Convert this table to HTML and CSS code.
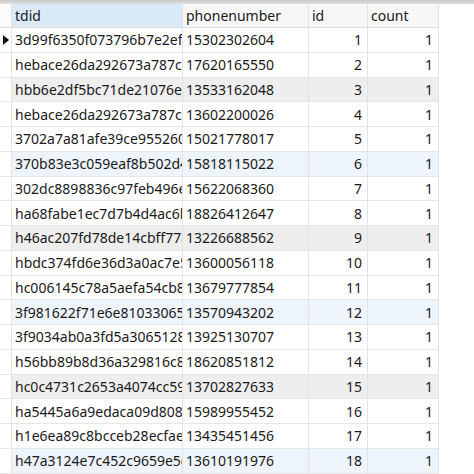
FILE: index.html
```html
<!DOCTYPE html>
<html>
<head>
<meta charset="utf-8">
<link rel="stylesheet" href="styles.css">
</head>
<body>
<div class="topbar"></div>
<div class="grid">
  <div class="c ind hd"></div><div class="c hd sel">tdid</div><div class="c hd">phonenumber</div><div class="c hd">id</div><div class="c hd">count</div>

  <div class="c ind"><span class="arrow"></span></div><div class="c">3d99f6350f073796b7e2ef4a1</div><div class="c">15302302604</div><div class="c num">1</div><div class="c num">1</div>
  <div class="c ind"></div><div class="c">hebace26da292673a787cb5e</div><div class="c">17620165550</div><div class="c num">2</div><div class="c num">1</div>
  <div class="c ind g"></div><div class="c g">hbb6e2df5bc71de21076e4c</div><div class="c g">13533162048</div><div class="c num g">3</div><div class="c num g">1</div>
  <div class="c ind"></div><div class="c">hebace26da292673a787cb5e</div><div class="c">13602200026</div><div class="c num">4</div><div class="c num">1</div>
  <div class="c ind"></div><div class="c">3702a7a81afe39ce955260a</div><div class="c">15021778017</div><div class="c num">5</div><div class="c num">1</div>
  <div class="c ind b"></div><div class="c b">370b83e3c059eaf8b502d4e</div><div class="c b">15818115022</div><div class="c num b">6</div><div class="c num b">1</div>
  <div class="c ind"></div><div class="c">302dc8898836c97feb496e1</div><div class="c">15622068360</div><div class="c num">7</div><div class="c num">1</div>
  <div class="c ind"></div><div class="c">ha68fabe1ec7d7b4d4ac6b2</div><div class="c">18826412647</div><div class="c num">8</div><div class="c num">1</div>
  <div class="c ind g"></div><div class="c g">h46ac207fd78de14cbff77a</div><div class="c g">13226688562</div><div class="c num g">9</div><div class="c num g">1</div>
  <div class="c ind"></div><div class="c">hbdc374fd6e36d3a0ac7e5f</div><div class="c">13600056118</div><div class="c num">10</div><div class="c num">1</div>
  <div class="c ind"></div><div class="c">hc006145c78a5aefa54cb8d</div><div class="c">13679777854</div><div class="c num">11</div><div class="c num">1</div>
  <div class="c ind b"></div><div class="c b">3f981622f71e6e81033065a</div><div class="c b">13570943202</div><div class="c num b">12</div><div class="c num b">1</div>
  <div class="c ind"></div><div class="c">3f9034ab0a3fd5a3065128c</div><div class="c">13925130707</div><div class="c num">13</div><div class="c num">1</div>
  <div class="c ind"></div><div class="c">h56bb89b8d36a329816c8e</div><div class="c">18620851812</div><div class="c num">14</div><div class="c num">1</div>
  <div class="c ind g"></div><div class="c g">hc0c4731c2653a4074cc59a</div><div class="c g">13702827633</div><div class="c num g">15</div><div class="c num g">1</div>
  <div class="c ind"></div><div class="c">ha5445a6a9edaca09d808e</div><div class="c">15989955452</div><div class="c num">16</div><div class="c num">1</div>
  <div class="c ind"></div><div class="c">h1e6ea89c8bcceb28ecfae3</div><div class="c">13435451456</div><div class="c num">17</div><div class="c num">1</div>
  <div class="c ind b"></div><div class="c b">h47a3124e7c452c9659e5d</div><div class="c b">13610191976</div><div class="c num b">18</div><div class="c num b">1</div>
</div>
</body>
</html>
```

FILE: styles.css
```css
html, body {
  margin: 0;
  padding: 0;
  background: #ffffff;
  overflow: hidden;
}
body {
  font-family: "Noto Sans", "Open Sans", sans-serif;
  font-size: 14px;
  color: #1a1a1a;
}
.topbar {
  height: 4px;
  background: linear-gradient(#c9c9c9, #dedede);
}
.grid {
  display: grid;
  grid-template-columns: 12px 171px 126px 59px 71px;
  grid-template-rows: 24px;
  grid-auto-rows: 24.75px;
}
.c {
  box-sizing: border-box;
  border-right: 1px solid #e3e3e3;
  border-bottom: 1px solid #e6e6e6;
  padding: 0 4px 0 3px;
  white-space: nowrap;
  overflow: hidden;
  display: flex;
  align-items: center;
}
.hd {
  background: #f7f7f7;
  border-bottom-color: #dcdcdc;
}
.hd.sel {
  background: #dbeaf9;
}
.ind {
  padding: 0;
  background: #ffffff;
}
.ind.hd {
  background: #fbfbfb;
}
.num {
  justify-content: flex-end;
  padding-right: 5px;
}
.g {
  background: #eeeeee;
}
.b {
  background: #eef4fb;
}
.ind.g, .ind.b {
  background: #ffffff;
}
.arrow {
  width: 0;
  height: 0;
  margin-left: 3px;
  border-top: 5px solid transparent;
  border-bottom: 5px solid transparent;
  border-left: 6px solid #111111;
}
```
